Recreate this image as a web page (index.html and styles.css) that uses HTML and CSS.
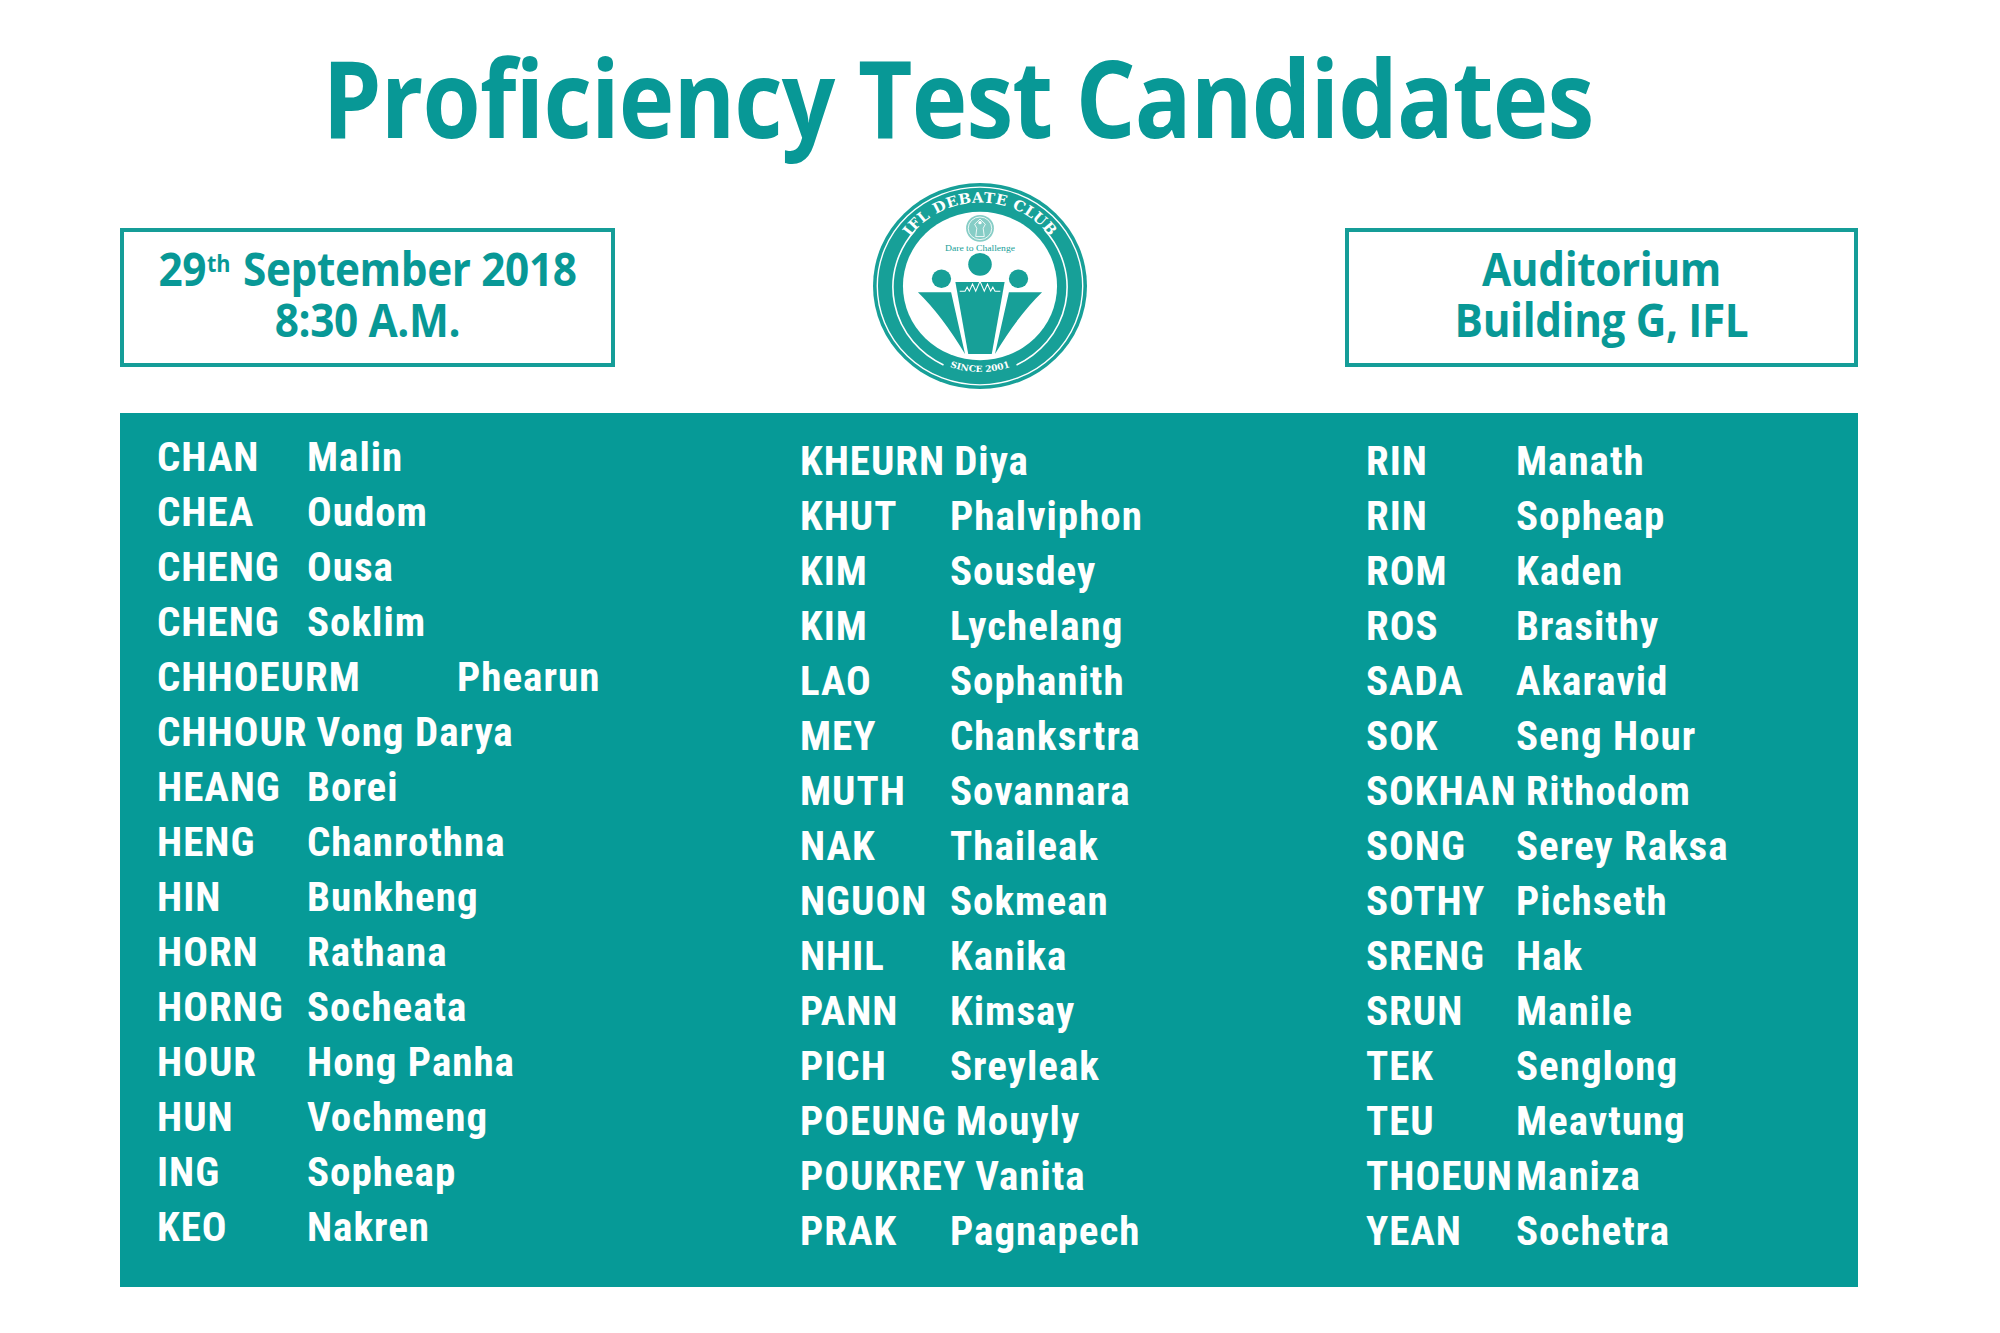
FILE: index.html
```html
<!DOCTYPE html>
<html lang="en">
<head>
<meta charset="utf-8">
<title>Proficiency Test Candidates</title>
<link rel="stylesheet" href="styles.css">
</head>
<body>
<div class="page">
  <h1 class="title">Proficiency Test Candidates</h1>

  <div class="info">
    <div class="box">
      <div class="box-line">29<span class="sup">th</span> September 2018</div>
      <div class="box-line">8:30 A.M.</div>
    </div>

    <svg class="logo" viewBox="0 0 200 200" width="214" height="206" preserveAspectRatio="none" aria-label="IFL Debate Club logo">
      <defs>
        <path id="arcTop" d="M 19 100 A 81 81 0 0 1 181 100"/>
        <path id="arcBottom" d="M 16.5 100 A 83.5 83.5 0 0 0 183.5 100"/>
      </defs>
      <circle cx="100" cy="100" r="100" fill="#17a098"/>
      <circle cx="100" cy="100" r="96" fill="none" stroke="#fff" stroke-width="1.3"/>
      <path d="M 160.4 45.6 A 84 84 0 0 1 134.1 176.7" fill="none" stroke="#fff" stroke-width="1.5"/>
      <path d="M 65.9 176.7 A 84 84 0 0 1 39.6 45.6" fill="none" stroke="#fff" stroke-width="1.5"/>
      <circle cx="100" cy="100" r="72" fill="#fff"/>
      <text class="logo-arc-top"><textPath href="#arcTop" startOffset="50%" text-anchor="middle">IFL DEBATE CLUB</textPath></text>
      <text class="logo-arc-bottom"><textPath href="#arcBottom" startOffset="50%" text-anchor="middle">SINCE 2001</textPath></text>
      <circle cx="100" cy="44" r="13" fill="#86cdc6"/>
      <circle cx="100" cy="44" r="11" fill="none" stroke="#fff" stroke-width="0.8"/>
      <path d="M96 52 L97 44 L95 40 L100 35 L105 40 L103 44 L104 52 Z" fill="none" stroke="#fff" stroke-width="0.8"/>
      <circle cx="100" cy="38.5" r="1.6" fill="#fff"/>
      <text class="logo-motto" x="100" y="66.5" text-anchor="middle">Dare to Challenge</text>
      <circle cx="100" cy="79" r="11" fill="#17a098"/>
      <circle cx="64" cy="93" r="9" fill="#17a098"/>
      <circle cx="136" cy="93" r="9" fill="#17a098"/>
      <path d="M42 106 L73 106 L86 166 Q64 128 42 106 Z" fill="#17a098"/>
      <path d="M158 106 L127 106 L114 166 Q136 128 158 106 Z" fill="#17a098"/>
      <path d="M77 96 L123 96 L111 166 L89 166 Z" fill="#17a098"/>
      <path d="M81 105 L86 105 L88 101 L90 105 L93 98 L96 105 L100 95.5 L104 105 L107 98 L110 105 L112 101 L114 105 L119 105" fill="none" stroke="#fff" stroke-width="1"/>
    </svg>

    <div class="box box-wide">
      <div class="box-line">Auditorium</div>
      <div class="box-line">Building G, IFL</div>
    </div>
  </div>

  <div class="panel">
    <div class="col col-first">
      <div class="row"><span class="sn">CHAN</span><span class="gn">Malin</span></div>
      <div class="row"><span class="sn">CHEA</span><span class="gn">Oudom</span></div>
      <div class="row"><span class="sn">CHENG</span><span class="gn">Ousa</span></div>
      <div class="row"><span class="sn">CHENG</span><span class="gn">Soklim</span></div>
      <div class="row"><span class="sn sn-wide">CHHOEURM</span><span class="gn">Phearun</span></div>
      <div class="row"><span class="sn">CHHOUR</span><span class="gn">Vong Darya</span></div>
      <div class="row"><span class="sn">HEANG</span><span class="gn">Borei</span></div>
      <div class="row"><span class="sn">HENG</span><span class="gn">Chanrothna</span></div>
      <div class="row"><span class="sn">HIN</span><span class="gn">Bunkheng</span></div>
      <div class="row"><span class="sn">HORN</span><span class="gn">Rathana</span></div>
      <div class="row"><span class="sn">HORNG</span><span class="gn">Socheata</span></div>
      <div class="row"><span class="sn">HOUR</span><span class="gn">Hong Panha</span></div>
      <div class="row"><span class="sn">HUN</span><span class="gn">Vochmeng</span></div>
      <div class="row"><span class="sn">ING</span><span class="gn">Sopheap</span></div>
      <div class="row"><span class="sn">KEO</span><span class="gn">Nakren</span></div>
    </div>
    <div class="col">
      <div class="row"><span class="sn">KHEURN</span><span class="gn">Diya</span></div>
      <div class="row"><span class="sn">KHUT</span><span class="gn">Phalviphon</span></div>
      <div class="row"><span class="sn">KIM</span><span class="gn">Sousdey</span></div>
      <div class="row"><span class="sn">KIM</span><span class="gn">Lychelang</span></div>
      <div class="row"><span class="sn">LAO</span><span class="gn">Sophanith</span></div>
      <div class="row"><span class="sn">MEY</span><span class="gn">Chanksrtra</span></div>
      <div class="row"><span class="sn">MUTH</span><span class="gn">Sovannara</span></div>
      <div class="row"><span class="sn">NAK</span><span class="gn">Thaileak</span></div>
      <div class="row"><span class="sn">NGUON</span><span class="gn">Sokmean</span></div>
      <div class="row"><span class="sn">NHIL</span><span class="gn">Kanika</span></div>
      <div class="row"><span class="sn">PANN</span><span class="gn">Kimsay</span></div>
      <div class="row"><span class="sn">PICH</span><span class="gn">Sreyleak</span></div>
      <div class="row"><span class="sn">POEUNG</span><span class="gn">Mouyly</span></div>
      <div class="row"><span class="sn">POUKREY</span><span class="gn">Vanita</span></div>
      <div class="row"><span class="sn">PRAK</span><span class="gn">Pagnapech</span></div>
    </div>
    <div class="col">
      <div class="row"><span class="sn">RIN</span><span class="gn">Manath</span></div>
      <div class="row"><span class="sn">RIN</span><span class="gn">Sopheap</span></div>
      <div class="row"><span class="sn">ROM</span><span class="gn">Kaden</span></div>
      <div class="row"><span class="sn">ROS</span><span class="gn">Brasithy</span></div>
      <div class="row"><span class="sn">SADA</span><span class="gn">Akaravid</span></div>
      <div class="row"><span class="sn">SOK</span><span class="gn">Seng Hour</span></div>
      <div class="row"><span class="sn">SOKHAN</span><span class="gn">Rithodom</span></div>
      <div class="row"><span class="sn">SONG</span><span class="gn">Serey Raksa</span></div>
      <div class="row"><span class="sn">SOTHY</span><span class="gn">Pichseth</span></div>
      <div class="row"><span class="sn">SRENG</span><span class="gn">Hak</span></div>
      <div class="row"><span class="sn">SRUN</span><span class="gn">Manile</span></div>
      <div class="row"><span class="sn">TEK</span><span class="gn">Senglong</span></div>
      <div class="row"><span class="sn">TEU</span><span class="gn">Meavtung</span></div>
      <div class="row"><span class="sn sn-tight">THOEUN</span><span class="gn">Maniza</span></div>
      <div class="row"><span class="sn">YEAN</span><span class="gn">Sochetra</span></div>
    </div>
  </div>
</div>
</body>
</html>
```

FILE: styles.css
```css
html, body {
  margin: 0;
  padding: 0;
  background: #ffffff;
}

.page {
  width: 1738px;
  padding-left: 120px;
  padding-bottom: 46px;
}

/* Open Sans Bold, narrowed to the proportions of the original heading face */
.title {
  margin: 43px 0 0 0;
  padding-right: 62px;
  font-family: "Open Sans", "Noto Sans", sans-serif;
  font-weight: 700;
  font-size: 108px;
  line-height: 108px;
  letter-spacing: -1px;
  color: #089896;
  text-align: center;
  white-space: nowrap;
  transform: scaleX(0.871);
  transform-origin: 838px 50%;
}

.info {
  margin-top: 32px;
  display: flex;
  justify-content: space-between;
  align-items: flex-start;
  height: 206px;
}

.box {
  width: 487px;
  margin-top: 45px;
  padding: 11px 0 18px 0;
  border: 4px solid #159d98;
  text-align: center;
  font-family: "Open Sans", "Noto Sans", sans-serif;
  font-weight: 700;
  font-size: 47px;
  line-height: 51px;
  letter-spacing: -0.4px;
  color: #089896;
}

.box-wide {
  width: 505px;
}

.box-line {
  white-space: nowrap;
  transform: scaleX(0.9);
  transform-origin: 50% 50%;
}

.sup {
  font-size: 24px;
  line-height: 24px;
  vertical-align: 14px;
  letter-spacing: 0;
  margin-left: 1px;
  margin-right: 2px;
}

.logo {
  display: block;
  flex-shrink: 0;
}

.logo-arc-top {
  font-family: "DejaVu Serif", "Liberation Serif", serif;
  font-weight: 700;
  font-size: 14px;
  letter-spacing: 0.4px;
  fill: #ffffff;
}

.logo-arc-bottom {
  font-family: "DejaVu Serif", "Liberation Serif", serif;
  font-weight: 700;
  font-size: 8.5px;
  fill: #ffffff;
}

.logo-motto {
  font-family: "Liberation Serif", "DejaVu Serif", serif;
  font-size: 9px;
  fill: #17a098;
}

.panel {
  margin-top: 24px;
  background: #069a97;
  padding: 17px 0 28px 37px;
  display: grid;
  grid-template-columns: 643px 566px 1fr;
  color: #ffffff;
  font-family: Roboto, "Open Sans", sans-serif;
  font-stretch: 75%;
  font-weight: 700;
  font-size: 41px;
  line-height: 55px;
  letter-spacing: 1px;
}

.col {
  margin-top: 4px;
}

.col-first {
  margin-top: 0;
  margin-bottom: 4px;
}

.row {
  white-space: nowrap;
}

.sn {
  display: inline-block;
  box-sizing: border-box;
  min-width: 150px;
  padding-right: 9px;
}

.sn-wide {
  min-width: 300px;
}

.sn-tight {
  padding-right: 0;
}

.gn {
  display: inline-block;
}
```
